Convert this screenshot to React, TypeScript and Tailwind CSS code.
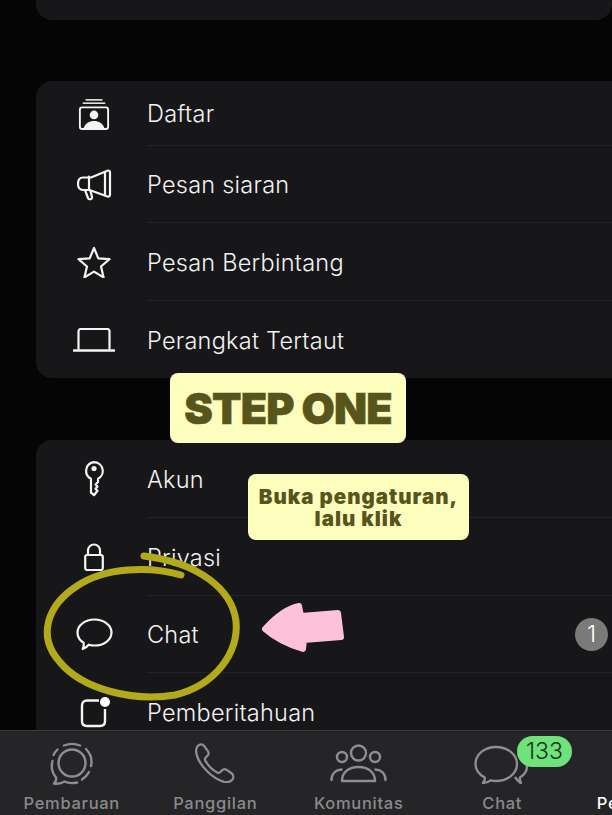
const textFont = "font-['Inter','Noto_Sans',sans-serif]"

function DaftarIcon() {
  return (
    <svg width="32" height="34" viewBox="0 0 34 34" fill="none" stroke="#f4f4f4" strokeWidth="2">
      <path d="M8 2h18" strokeWidth="1.600" />
      <path d="M5 5.500h24" strokeWidth="1.600" />
      <rect x="2" y="10" width="30" height="23" rx="2.500" />
      <circle cx="17" cy="18" r="4.600" fill="#f4f4f4" stroke="none" />
      <path d="M6 32c1.500-5 6-7.500 11-7.500s9.500 2.500 11 7.500z" fill="#f4f4f4" stroke="none" />
    </svg>
  )
}

function MegaphoneIcon() {
  return (
    <svg width="36" height="34" viewBox="0 0 36 34" fill="none" stroke="#f4f4f4" strokeWidth="2.200" strokeLinejoin="round" strokeLinecap="round">
      <path d="M32 2.500c1.500 0 2 1 2 2v22c0 1.500-1 2.500-2.500 2l-18-6.500H7c-3 0-5-2.500-5-6s1.500-6.500 5-6.500h8z" />
      <path d="M13 8.500v13" />
      <path d="M29 4.500v23" />
      <path d="M9 22l3 8c.8 2 4.500 1.500 4-1l-1.500-6" />
    </svg>
  )
}

function StarIcon() {
  return (
    <svg width="34" height="32" viewBox="0 0 34 32" fill="none" stroke="#f4f4f4" strokeWidth="2.200" strokeLinejoin="round">
      <path d="M17 2l4.300 10.300 11.200.9-8.500 7.300 2.600 10.900L17 25.600l-9.600 5.800L10 20.500 1.500 13.200l11.200-.9z" />
    </svg>
  )
}

function LaptopIcon() {
  return (
    <svg width="42" height="24" viewBox="0 0 42 24" fill="none" stroke="#f4f4f4" strokeWidth="2.200" strokeLinecap="round">
      <path d="M5.500 21V3.500c0-1.500 1-2.500 2.500-2.500h26c1.500 0 2.500 1 2.500 2.500V21" />
      <path d="M1 22.500h40" strokeWidth="2.600" />
    </svg>
  )
}

function KeyIcon() {
  return (
    <svg width="20" height="37" viewBox="0 0 20 37" fill="none" stroke="#f4f4f4" strokeWidth="2.200" strokeLinejoin="round">
      <path d="M10 1.200a8.800 8.800 0 0 1 4 16.600v3.200l-2.500 2.500 2 2-2 2.200 2 2-3.500 4.500-3-2.500V17.800a8.800 8.800 0 0 1 3-16.600z" />
      <circle cx="10" cy="7.500" r="2.600" fill="#f4f4f4" stroke="none" />
    </svg>
  )
}

function LockIcon() {
  return (
    <svg width="20" height="28" viewBox="0 0 20 28" fill="none" stroke="#f4f4f4" strokeWidth="2.200">
      <rect x="1.200" y="12" width="17.600" height="15" rx="2" />
      <path d="M4 12V7.500a6 6 0 0 1 12 0V12" />
    </svg>
  )
}

function BubbleIcon() {
  return (
    <svg width="37" height="33" viewBox="0 0 37 33" fill="none" stroke="#f4f4f4" strokeWidth="2.200" strokeLinejoin="round">
      <path d="M18.500 1.500c9.500 0 17 5.700 17 13 0 7.400-7.500 13-17 13-2 0-4-.3-5.800-.8-1.400 1.800-3.800 3.600-6 4.300 1-1.800 1.300-4 1-6.200C3.800 22.500 1.500 18.800 1.500 14.500c0-7.300 7.500-13 17-13z" />
    </svg>
  )
}

function NotifIcon() {
  return (
    <div className="relative h-[31px] w-[29px]">
      <svg width="29" height="31" viewBox="0 0 29 31" fill="none" stroke="#f4f4f4" strokeWidth="2.400">
        <path d="M19 3.500H7c-3 0-5 2-5 5V24c0 3 2 5 5 5h13c3 0 5-2 5-5V12" />
      </svg>
      <span className="absolute right-[-1px] top-0 h-[10px] w-[10px] rounded-full bg-white" />
    </div>
  )
}

function Row({ icon, label, first, h = 'h-[77.500px]', trailing }: { icon: React.ReactNode; label: string; first?: boolean; h?: string; trailing?: React.ReactNode }) {
  return (
    <div className={`flex shrink-0 items-center ${h}`}>
      <div className="mt-[2px] flex w-[111px] shrink-0 justify-center pl-[5px]">{icon}</div>
      <div className={`flex h-full flex-1 items-center justify-between pr-[4px] ${first ? '' : 'border-t border-[#232325]'}`}>
        <span className={`${textFont} mt-[2px] text-[23.500px] font-[350] leading-none tracking-[0.25px] text-[#f2f2f2]`}>{label}</span>
        {trailing}
      </div>
    </div>
  )
}

function TabItem({ label, active, children }: { label: string; active?: boolean; children?: React.ReactNode }) {
  return (
    <div className="relative flex h-full w-[143.500px] shrink-0 flex-col items-center">
      <div className="flex h-[58px] items-end justify-center">{children}</div>
      <span className={`${textFont} mt-[4px] whitespace-nowrap text-[16.500px] font-medium leading-[20px] tracking-[0.7px] ${active ? 'text-white' : 'text-[#8a8a8c]'}`}>{label}</span>
    </div>
  )
}

export default function App() {
  return (
    <div className="relative flex h-[815px] w-[612px] flex-col overflow-hidden bg-[#050506]">
      <main className="flex min-h-0 flex-1 flex-col overflow-hidden pl-[36px]">
        <div className="h-[20px] shrink-0 rounded-b-[16px] bg-[#171719]" />

        <section className="mt-[61px] shrink-0 rounded-l-[16px] bg-[#171719]">
          <Row first h="h-[64px]" icon={<DaftarIcon />} label="Daftar" />
          <Row h="h-[77px]" icon={<MegaphoneIcon />} label="Pesan siaran" />
          <Row h="h-[78px]" icon={<StarIcon />} label="Pesan Berbintang" />
          <Row h="h-[78px]" icon={<LaptopIcon />} label="Perangkat Tertaut" />
        </section>

        <section className="mt-[62px] flex-1 rounded-tl-[16px] bg-[#171719]">
          <Row first h="h-[77px]" icon={<KeyIcon />} label="Akun" />
          <Row h="h-[78px]" icon={<LockIcon />} label="Privasi" />
          <Row
            h="h-[77px]"
            icon={<BubbleIcon />}
            label="Chat"
            trailing={
              <span className={`${textFont} flex h-[33px] w-[33px] items-center justify-center rounded-full bg-[#7a7a7a] text-[23px] font-light text-white`}>1</span>
            }
          />
          <Row h="h-[78px]" icon={<NotifIcon />} label="Pemberitahuan" />
        </section>
      </main>

      <nav className="flex h-[85px] shrink-0 overflow-hidden border-t border-[#3a3a3c] bg-[#252527]">
        <TabItem label="Pembaruan">
          <svg width="44" height="44" viewBox="0 0 44 44" fill="none" stroke="#8e8e90" strokeWidth="2.400" strokeLinecap="round" strokeLinejoin="round" className="mb-[3px]">
            <circle cx="22" cy="21" r="13.500" />
            <path d="M14 3.500c5-2 11-2 16 0" />
            <path d="M36 7c3.500 3.500 5.500 8 5.500 12.500 0 1.500 0 3-.5 4.500" />
            <path d="M39 30c-1.500 3-4 5.500-7 7.500" />
            <path d="M27 40.500c-4.500 1-9 .7-12.500-1l-1 .5c-3 1.500-7 2-9.500 1.500 1.500-1.500 2.500-4 2-6-4-5-5-11-3.500-16.500" />
            <path d="M3.500 13c1-2 2.500-4 4-5.500" />
          </svg>
        </TabItem>
        <TabItem label="Panggilan">
          <svg width="40" height="41" viewBox="0 0 42 42" fill="none" stroke="#8e8e90" strokeWidth="2.400" strokeLinejoin="round" className="mb-[6px]">
            <path d="M3 3.500c2-2 5-2 6.500 0l4 5.500c1.200 1.700 1 3.500-.5 5l-2 2c-.8.800-.8 1.800-.2 3 3 5.500 7 9.500 12.500 12.500 1.200.7 2.200.6 3-.2l2-2c1.500-1.500 3.300-1.700 5-.5l5 3.500c2 1.500 2.500 4.500 1 6.500-2 2.500-5 3.500-9 2.500C19 38 5 25 1.800 13 .8 9 1 5.500 3 3.500z" />
          </svg>
        </TabItem>
        <TabItem label="Komunitas">
          <svg width="57" height="39" viewBox="0 0 57 39" fill="none" stroke="#8e8e90" strokeWidth="2.400" strokeLinecap="round" strokeLinejoin="round" className="mb-[6px]">
            <circle cx="28.500" cy="9" r="7.500" />
            <circle cx="12" cy="13" r="5" />
            <circle cx="45" cy="13" r="5" />
            <path d="M12 37c0-9 7-14 16.500-14S45 28 45 37z" />
            <path d="M1.500 36c0-6 4-10 10-10.500" />
            <path d="M55.500 36c0-6-4-10-10-10.500" />
          </svg>
        </TabItem>
        <TabItem label="Chat">
          <svg width="56" height="42" viewBox="0 0 56 42" fill="none" stroke="#8e8e90" strokeWidth="2.400" strokeLinejoin="round" className="mb-[4px]">
            <path d="M22 4c11.500 0 21 7.500 21 17S33.500 38 22 38c-2 0-4-.2-5.500-.7-2 1.700-4.500 2.700-7.500 2.700 1.300-1.500 2-3.500 1.800-5.500C5 31.500 1.500 27 1.500 21 1.500 11.500 10.500 4 22 4z" />
            <path d="M41 34c1.500 2 3.500 5 6 6-1-2-1.500-3.500-1-5.500 4-2.500 7-6.500 7-11 0-3-1-5-3-8" />
          </svg>
          <span className={`${textFont} absolute left-[86.500px] top-[5px] flex h-[31px] w-[55px] items-center justify-center rounded-full bg-[#70e27c] text-[23px] font-[350] leading-none text-[#16331b]`}>133</span>
        </TabItem>
        <TabItem active label="Pengaturan" />
      </nav>

      {/* stiker dan coretan di atas layar */}
      <div className="absolute left-[170px] top-[373px] flex h-[70px] w-[236px] items-center justify-center rounded-[8px] bg-[#fdfdbd]">
        <span className="font-['Inter',sans-serif] text-[43px] font-black leading-none tracking-[-0.800px] text-[#57541c] [-webkit-text-stroke:0.6px_#57541c]">STEP ONE</span>
      </div>
      <div className="absolute left-[248px] top-[474px] flex h-[66px] w-[221px] items-center justify-center rounded-[8px] bg-[#fdfdbd] pt-[2px] text-center">
        <span className="font-['Inter',sans-serif] text-[20.500px] font-black leading-[22px] tracking-[1px] text-[#57541c]">
          Buka pengaturan,
          <br />
          lalu klik
        </span>
      </div>

      <svg className="absolute left-0 top-[540px]" width="260" height="180" viewBox="0 540 260 180" fill="none" strokeLinecap="round">
        <path
          d="M181 575C150 566 105 567 77 586C46 606 38 637 59 661C82 690 135 702 175 695C216 685 239 652 236 621C232 590 200 563 144 556"
          stroke="#b3aa1b"
          strokeWidth="7"
        />
      </svg>

      <svg className="absolute left-[258px] top-[598px]" width="90" height="60" viewBox="258 598 90 60" fill="#fdc2da" stroke="#fdc2da" strokeWidth="6" strokeLinejoin="round">
        <path d="M265 629C275 618 288 608 299 606L301 616L338 613L341 637L304 640L303 649C290 645 275 638 265 629z" />
      </svg>
    </div>
  )
}
